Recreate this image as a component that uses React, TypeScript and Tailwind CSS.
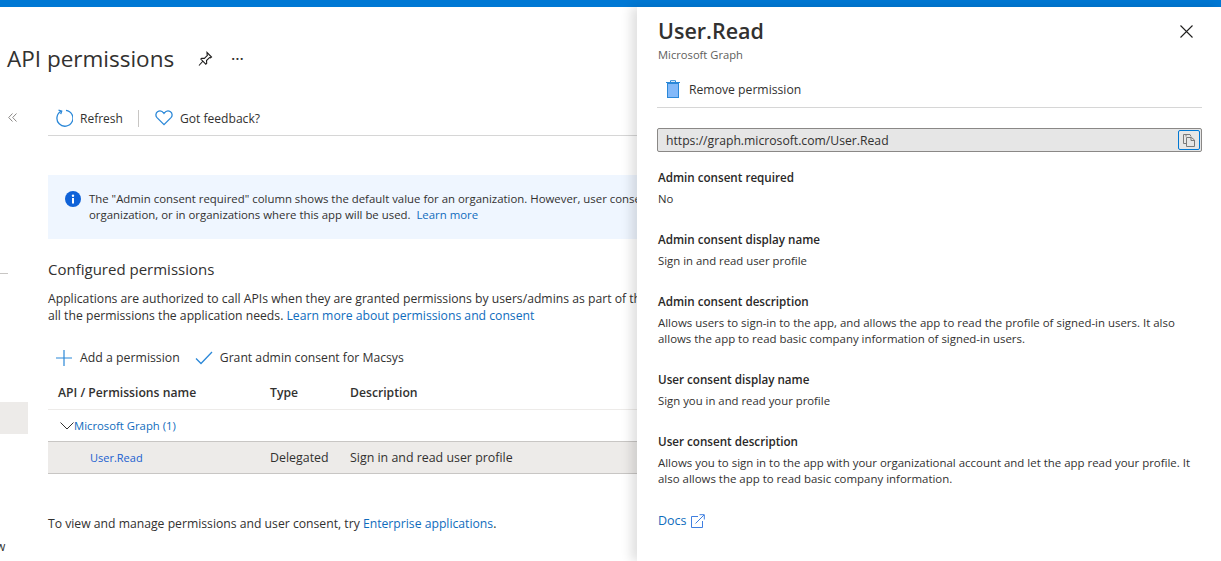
import React from 'react';

const Link = ({ children }: { children: React.ReactNode }) => (
  <span className="text-[#0f6cbd]">{children}</span>
);

const Field = ({ label, value }: { label: string; value: React.ReactNode }) => (
  <div className="h-[62px]">
    <div className="text-[11.650px] leading-[16px] font-semibold text-[#292827]">{label}</div>
    <div className="mt-[5px] text-[11.350px] leading-[16px] text-[#323130]">{value}</div>
  </div>
);

const Blue = '#2b88d8';

export default function App() {
  return (
    <div className="relative h-[561px] w-[1221px] overflow-hidden bg-white font-['Open_Sans',sans-serif] text-[#323130]">
      <div className="relative h-[7px] overflow-hidden bg-[#0078d4]">
        <span className="absolute left-[1143px] top-[-10px] text-[10px] leading-[12px] font-semibold text-white">MACSYS</span>
      </div>

      <div className="flex">
        {/* clipped resource menu */}
        <div className="w-[48px] shrink-0 overflow-hidden">
          <div className="h-[106px]" />
          <svg className="ml-[8px]" width="9" height="9" viewBox="0 0 9 9" fill="none" stroke="#8a8886" strokeWidth="1">
            <path d="M4.500.500L.700 4.500l3.800 4M8.500.500L4.700 4.500l3.800 4" />
          </svg>
          <div className="mt-[151px] h-px w-[8px] bg-[#c8c6c4]" />
          <div className="mt-[128px] h-[32px] w-[28px] bg-[#edebe9]" />
          <div className="mt-[105px] -ml-[4px] text-[12px] leading-[16px] text-[#323130]">w</div>
        </div>

        <div className="relative -ml-[48px] flex-1">
          <div className="flex h-[91px] items-start pl-[7px] pt-[33px]">
            <h1 className="text-[22.500px] leading-[38px] text-[#323130]">API permissions</h1>
            <svg className="ml-[22px] mt-[10px]" width="18" height="18" viewBox="0 0 18 18" fill="none" stroke="#201f1e" strokeWidth="1.100">
              <path d="M11 2.500l4.500 4.500-1 .8-1-.3-3 3 .2 2.700-.9.9-5-5 .9-.9 2.700.2 3-3-.3-1z" />
              <path d="M7 11l-4 4.500" />
            </svg>
            <span className="ml-[17px] mt-[9px] text-[14px] leading-[20px] font-semibold tracking-[0.500px] text-[#323130]">···</span>
          </div>

          <div className="ml-[48px] flex h-[38px] items-center border-b border-[#d6d6d6] pt-[4px]">
            <svg className="ml-[7px] -mt-px" width="18" height="18" viewBox="0 0 18 18" fill="none" stroke={Blue} strokeWidth="1.300">
              <path d="M6.500 2A8 8 0 1 0 11 1.300" />
              <path d="M3.500 1.200l3.200.9-1 3" />
            </svg>
            <span className="ml-[7px] text-[12px] leading-[18px]">Refresh</span>
            <span className="ml-[15px] h-[17px] w-px bg-[#c8c6c4]" />
            <svg className="ml-[16px] -mt-px" width="18" height="16" viewBox="0 0 18 16" fill="none" stroke={Blue} strokeWidth="1.300">
              <path d="M9 14.600L2 7.600C.3 5.800.7 3 2.500 1.800 4.500.5 7.200 1 9 3.400 10.800 1 13.500.5 15.500 1.800 17.300 3 17.700 5.800 16 7.600z" />
            </svg>
            <span className="ml-[7px] text-[12.100px] leading-[18px]">Got feedback?</span>
          </div>

          <div className="ml-[48px] mt-[39px] flex h-[64px] bg-[#eff6ff] pl-[17px] pt-[16px]">
            <svg className="shrink-0" width="16" height="16" viewBox="0 0 16 16">
              <circle cx="8" cy="8" r="8" fill="#0f62d8" />
              <rect x="7" y="7" width="2" height="5.500" fill="#fff" />
              <circle cx="8" cy="4.700" r="1.200" fill="#fff" />
            </svg>
            <p className="ml-[8px] w-[600px] text-[11.400px] leading-[16px] text-[#323130]">
              <span className="block whitespace-nowrap">The "Admin consent required" column shows the default value for an organization. However, user consent can be customized per permission, user, or app.</span>
              <span className="block whitespace-nowrap">organization, or in organizations where this app will be used.&nbsp; <Link>Learn more</Link></span>
            </p>
          </div>

          <h2 className="ml-[48px] mt-[20px] text-[15px] leading-[20px] text-[#323130]">Configured permissions</h2>
          <p className="ml-[48px] mt-[11px] text-[12.200px] leading-[17px] text-[#323130]">
            <span className="block whitespace-nowrap">Applications are authorized to call APIs when they are granted permissions by users/admins as part of the consent process. The list of configured permissions should include</span>
            <span className="block whitespace-nowrap">all the permissions the application needs. <Link>Learn more about permissions and consent</Link></span>
          </p>

          <div className="ml-[48px] mt-[20px] flex h-[28px] items-center">
            <svg className="ml-[8px]" width="16" height="16" viewBox="0 0 16 16" stroke={Blue} strokeWidth="1.200">
              <path d="M8 0v16M0 8h16" />
            </svg>
            <span className="ml-[8px] text-[12.300px] leading-[18px]">Add a permission</span>
            <svg className="ml-[15px]" width="18" height="14" viewBox="0 0 18 14" fill="none" stroke={Blue} strokeWidth="1.300">
              <path d="M1 7.500l5 5L17 1" />
            </svg>
            <span className="ml-[7px] text-[12.200px] leading-[18px]">Grant admin consent for Macsys</span>
          </div>

          <div className="ml-[48px] mt-[6px] grid h-[32px] grid-cols-[212px_80px_1fr] items-center border-b border-[#edebe9] pb-[1px] pl-[10px] text-[12.200px] font-semibold leading-[18px] text-[#323130]">
            <span>API / Permissions name</span>
            <span>Type</span>
            <span>Description</span>
          </div>
          <div className="ml-[48px] flex h-[32px] items-center border-b border-[#c8c6c4] pl-[12px]">
            <svg width="14" height="8" viewBox="0 0 14 8" fill="none" stroke="#323130" strokeWidth="1">
              <path d="M.5.500L7 7l6.500-6.500" />
            </svg>
            <span className="text-[11.300px] leading-[16px]"><Link>Microsoft Graph (1)</Link></span>
          </div>
          <div className="ml-[48px] grid h-[32px] grid-cols-[222px_80px_1fr] items-center border-b border-[#c8c6c4] bg-[#edebe9] text-[12.400px] leading-[18px]">
            <span className="pl-[42px] text-[11px]"><span className="text-[#1a5fd0]">User.Read</span></span>
            <span className="pt-px">Delegated</span>
            <span className="pt-px">Sign in and read user profile</span>
          </div>

          <p className="ml-[48px] mt-[41px] text-[12.200px] leading-[18px]">
            To view and manage permissions and user consent, try <Link>Enterprise applications</Link>.
          </p>
        </div>
      </div>

      {/* details blade */}
      <aside className="absolute bottom-0 right-0 top-[7px] w-[584px] bg-white pl-[21px] pr-[19px] shadow-[-6px_0_10px_rgba(0,0,0,0.12)]">
        <div className="flex items-start justify-between">
          <h2 className="mt-[7px] text-[21.500px] leading-[34px] font-semibold text-[#323130]">User.Read</h2>
          <svg className="mr-[9px] mt-[18px]" width="13" height="13" viewBox="0 0 13 13" fill="none" stroke="#201f1e" strokeWidth="1.100">
            <path d="M.5.500l12 12M12.500.500l-12 12" />
          </svg>
        </div>
        <div className="-mt-px text-[11.200px] leading-[16px] text-[#605e5c]">Microsoft Graph</div>

        <div className="-ml-px mt-[7px] flex h-[38px] items-center border-b border-[#d6d6d6] pt-[3px]">
          <svg className="ml-[9px] -mt-[2px]" width="14" height="18" viewBox="0 0 14 18">
            <rect x="1.500" y="3.500" width="11" height="14" fill="#83b9f9" stroke="#2b88d8" />
            <path d="M0 2.500h14M4.500 2V.700h5V2" fill="none" stroke="#2b88d8" />
          </svg>
          <span className="ml-[9px] text-[12.200px] leading-[18px]">Remove permission</span>
        </div>

        <div className="-ml-px mt-[20px] flex h-[24px] items-center justify-between rounded-[2px] border border-[#8a8886] bg-[#e6e6e6] pl-[8px] pr-px">
          <span className="pt-[2px] text-[12.200px] leading-[18px] text-[#323130]">https://graph.microsoft.com/User.Read</span>
          <span className="flex h-[20px] w-[22px] items-center justify-center rounded-[2px] border border-[#0078d4]">
            <svg width="12" height="13" viewBox="0 0 12 13" fill="none" stroke="#7a7a7a">
              <path d="M3 2.500V.500h4l1 2M3 9.500H.500V.500H3" />
              <path d="M3.500 3.500h5l3 2.500v6.500h-8zM8 3.500v3h3.500" fill="#e6e6e6" />
            </svg>
          </span>
        </div>

        <div className="mt-[18px]">
          <Field label="Admin consent required" value="No" />
          <Field label="Admin consent display name" value="Sign in and read user profile" />
          <div className="h-[78px]">
            <div className="text-[11.650px] leading-[16px] font-semibold text-[#292827]">Admin consent description</div>
            <div className="mt-[5px] text-[11.450px] leading-[16px] text-[#323130]">
              Allows users to sign-in to the app, and allows the app to read the profile of signed-in users. It also allows the app to read basic company information of signed-in users.
            </div>
          </div>
          <Field label="User consent display name" value="Sign you in and read your profile" />
          <div className="h-[78px]">
            <div className="text-[11.650px] leading-[16px] font-semibold text-[#292827]">User consent description</div>
            <div className="mt-[5px] text-[11.450px] leading-[16px] text-[#323130]">
              Allows you to sign in to the app with your organizational account and let the app read your profile. It also allows the app to read basic company information.
            </div>
          </div>
        </div>

        <div className="flex items-center">
          <span className="text-[12.500px] leading-[18px]"><Link>Docs</Link></span>
          <svg className="ml-[4px]" width="14" height="14" viewBox="0 0 14 14" fill="none" stroke="#3f7fe0">
            <path d="M7 2.500H.500v11h11V7" />
            <path d="M4.500 9.500L13 1M8.500.700h4.800v4.800" />
          </svg>
        </div>
      </aside>
    </div>
  );
}
